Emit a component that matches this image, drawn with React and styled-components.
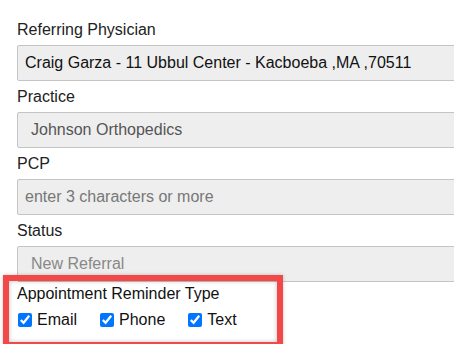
import styled, { createGlobalStyle } from 'styled-components';

const GlobalStyle = createGlobalStyle`
  html, body {
    margin: 0;
    padding: 0;
    background: #ffffff;
    overflow: hidden;
  }
  body {
    font-family: "Liberation Sans", Arial, sans-serif;
    font-size: 16px;
    color: #222;
  }
`;

const Page = styled.div`
  width: 454px;
  height: 344px;
  overflow: hidden;
`;

const Form = styled.div`
  padding: 20px 0 0 17px;
`;

const Group = styled.div`
  display: flex;
  flex-direction: column;
  margin-bottom: 6px;
`;

const Label = styled.div`
  line-height: 20px;
  margin-bottom: 5px;
  color: #222;
`;

const Field = styled.div`
  box-sizing: border-box;
  width: 460px;
  height: 36px;
  display: flex;
  align-items: center;
  padding-left: ${(p) => (p.$indent ? '13px' : '7px')};
  background: #eeeeee;
  border: 1px solid #c4c4c4;
  border-radius: 2px;
  color: ${(p) => p.$color || '#111'};
  white-space: nowrap;
`;

const Highlight = styled.section`
  position: relative;
  z-index: 1;
  box-sizing: border-box;
  width: 280px;
  margin: -13px 0 0 -14px;
  padding: 3px 8px 12px 8px;
  border: 6px solid #f24848;
  box-shadow: inset 0 0 4px rgba(0, 0, 0, 0.25), 0 0 4px rgba(0, 0, 0, 0.2);
`;

const SectionTitle = styled.div`
  line-height: 20px;
  margin-bottom: 6px;
  color: #111;
`;

const Options = styled.div`
  display: flex;
  align-items: center;
  gap: 22px;
`;

const Option = styled.label`
  display: flex;
  align-items: center;
  gap: 5px;
  line-height: 20px;
  color: #111;
`;

const Check = styled.input`
  width: 14px;
  height: 14px;
  margin: 0 0 0 1px;
  accent-color: #0075ff;
`;

const fields = [
  { label: 'Referring Physician', value: 'Craig Garza - 11 Ubbul Center - Kacboeba ,MA ,70511' },
  { label: 'Practice', value: 'Johnson Orthopedics', indent: true, color: '#555' },
  { label: 'PCP', value: 'enter 3 characters or more', color: '#777' },
  { label: 'Status', value: 'New Referral', indent: true, color: '#888' },
];

const reminders = ['Email', 'Phone', 'Text'];

export default function App() {
  return (
    <Page>
      <GlobalStyle />
      <Form>
        {fields.map((f) => (
          <Group key={f.label}>
            <Label>{f.label}</Label>
            <Field $indent={f.indent} $color={f.color}>
              {f.value}
            </Field>
          </Group>
        ))}
        <Highlight>
          <SectionTitle>Appointment Reminder Type</SectionTitle>
          <Options>
            {reminders.map((r) => (
              <Option key={r}>
                <Check type="checkbox" defaultChecked />
                {r}
              </Option>
            ))}
          </Options>
        </Highlight>
      </Form>
    </Page>
  );
}
